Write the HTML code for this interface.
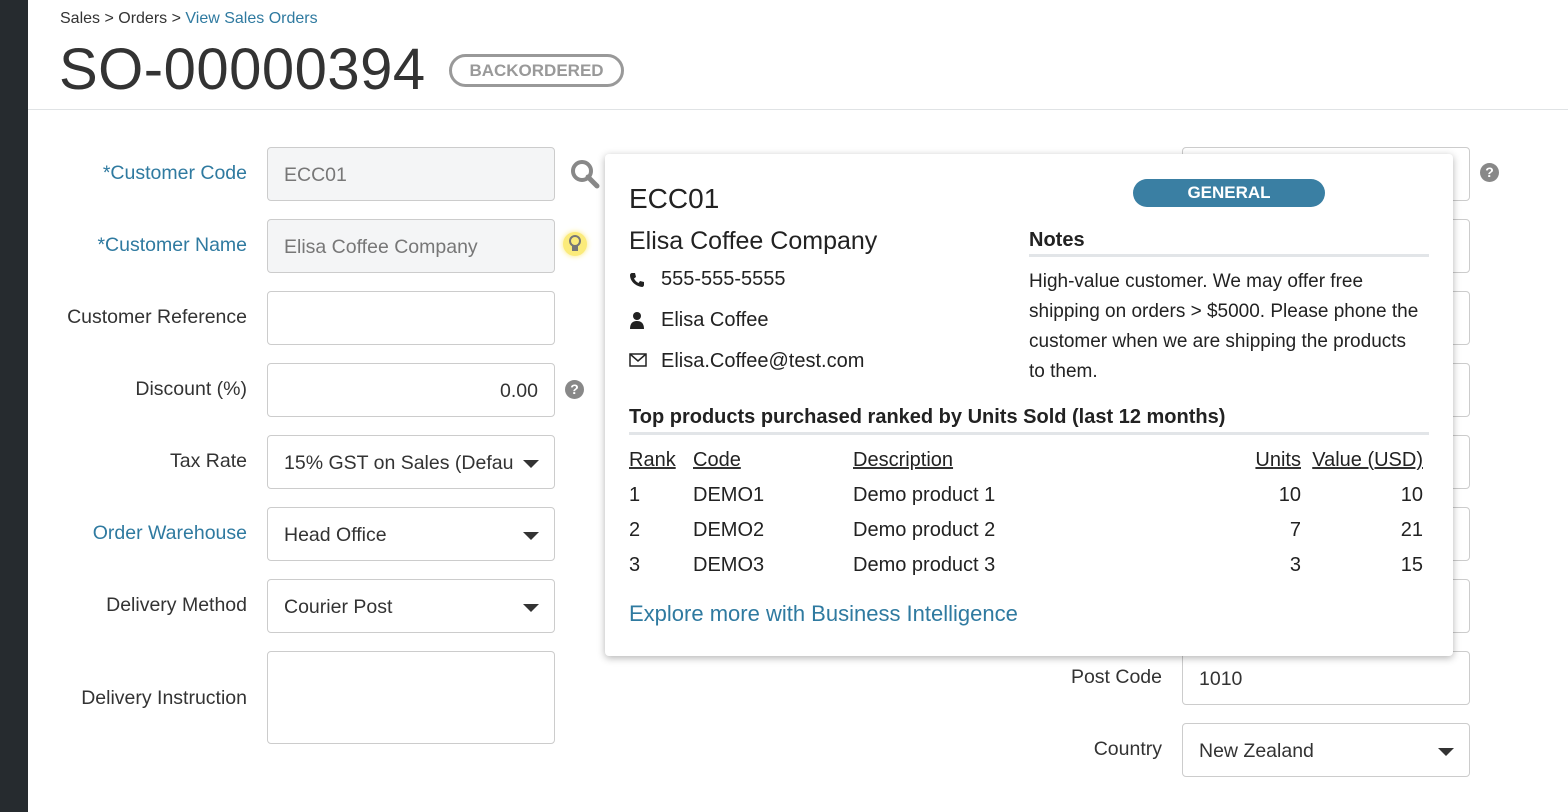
<!DOCTYPE html>
<html><head><style>
*{box-sizing:border-box;margin:0;padding:0}
body{width:1568px;height:812px;overflow:hidden;background:#fff;font-family:"Liberation Sans",sans-serif;color:#333;position:relative}
.side{position:absolute;left:0;top:0;width:28px;height:812px;background:#262b2f}
.a{position:absolute}
.lbl{position:absolute;width:220px;text-align:right;font-size:19.5px;color:#333}
.lbl.b{color:#2f7aa0}
.inp{position:absolute;width:288px;height:54px;border:1px solid #ccc;border-radius:4px;background:#fff;font-size:19.5px;padding:16px 16px;color:#333}
.inp.g{background:#f4f5f6;color:#777}
.dd:after{content:"";position:absolute;right:15px;top:24px;border-left:8px solid transparent;border-right:8px solid transparent;border-top:8px solid #333}
.q{position:absolute;width:19px;height:19px;border-radius:50%;background:#888;color:#fff;font-size:14px;font-weight:bold;text-align:center;line-height:19px}
.pop{position:absolute;left:605px;top:154px;width:848px;height:502px;background:#fff;border-radius:4px;box-shadow:0 2px 8px rgba(0,0,0,.3)}
.pop .t{position:absolute;font-size:20px;color:#222}
td{font-size:20px;color:#222;height:35px}
</style></head><body>
<div class="side"></div>
<div class="a" style="left:60px;top:10px;font-size:16px">Sales &gt; Orders &gt; <span style="color:#2f7aa0">View Sales Orders</span></div>
<div class="a" style="left:59px;top:36px;font-size:58px;color:#333;letter-spacing:0.5px">SO-00000394</div>
<div class="a" style="left:449px;top:54px;width:175px;height:33px;border:3px solid #999;border-radius:17px;color:#999;font-weight:bold;font-size:17px;text-align:center;line-height:27px">BACKORDERED</div>
<div class="a" style="left:28px;top:109px;width:1540px;height:1px;background:#e0e3e5"></div>

<div class="lbl b" style="left:27px;top:162px">*Customer Code</div>
<div class="inp g" style="left:267px;top:147px">ECC01</div>
<div class="lbl b" style="left:27px;top:234px">*Customer Name</div>
<div class="inp g" style="left:267px;top:219px">Elisa Coffee Company</div>
<div class="lbl" style="left:27px;top:306px">Customer Reference</div>
<div class="inp" style="left:267px;top:291px"></div>
<div class="lbl" style="left:27px;top:378px">Discount (%)</div>
<div class="inp" style="left:267px;top:363px;text-align:right">0.00</div>
<div class="q" style="left:565px;top:380px">?</div>
<div class="lbl" style="left:27px;top:450px">Tax Rate</div>
<div class="inp dd" style="left:267px;top:435px">15% GST on Sales (Defau</div>
<div class="lbl b" style="left:27px;top:522px">Order Warehouse</div>
<div class="inp dd" style="left:267px;top:507px">Head Office</div>
<div class="lbl" style="left:27px;top:594px">Delivery Method</div>
<div class="inp dd" style="left:267px;top:579px">Courier Post</div>
<div class="lbl" style="left:27px;top:687px">Delivery Instruction</div>
<div class="inp" style="left:267px;top:651px;height:93px"></div>

<svg class="a" style="left:569px;top:158px" width="32" height="32" viewBox="0 0 32 32"><circle cx="13" cy="13" r="9" fill="none" stroke="#888" stroke-width="4"/><path d="M19 19l9 9" stroke="#888" stroke-width="5" stroke-linecap="round"/></svg>
<div class="a" style="left:563px;top:232px;width:24px;height:24px;border-radius:50%;background:#fbeb7a;box-shadow:0 0 6px #fbe97a"></div>
<svg class="a" style="left:567px;top:234px" width="16" height="20" viewBox="0 0 16 20"><circle cx="8" cy="7" r="5" fill="none" stroke="#777" stroke-width="2"/><rect x="5" y="12" width="6" height="5" fill="#777"/></svg>

<div class="inp" style="left:1182px;top:147px"></div>
<div class="q" style="left:1480px;top:163px">?</div>
<div class="inp" style="left:1182px;top:219px"></div>
<div class="inp" style="left:1182px;top:291px"></div>
<div class="inp" style="left:1182px;top:363px"></div>
<div class="inp" style="left:1182px;top:435px"></div>
<div class="inp" style="left:1182px;top:507px"></div>
<div class="inp" style="left:1182px;top:579px"></div>
<div class="lbl" style="left:942px;top:666px">Post Code</div>
<div class="inp" style="left:1182px;top:651px">1010</div>
<div class="lbl" style="left:942px;top:738px">Country</div>
<div class="inp dd" style="left:1182px;top:723px">New Zealand</div>

<div class="pop">
<div class="t" style="left:24px;top:29px;font-size:28px">ECC01</div>
<div class="t" style="left:24px;top:73px;font-size:25px">Elisa Coffee Company</div>
<svg class="a" style="left:24px;top:118px" width="16" height="16" viewBox="0 0 16 16"><path d="M3 1l3 0 1 4-2 1.5c1 2 2.5 3.5 4.5 4.5L11 9l4 1v3c0 1-1 2-2 2C6 14 1 9 1 3c0-1 1-2 2-2z" fill="#222"/></svg>
<div class="t" style="left:56px;top:114px">555-555-5555</div>
<svg class="a" style="left:24px;top:157px" width="16" height="18" viewBox="0 0 16 18"><circle cx="8" cy="5" r="4" fill="#222"/><path d="M1 18c0-6 3-8 7-8s7 2 7 8z" fill="#222"/></svg>
<div class="t" style="left:56px;top:155px">Elisa Coffee</div>
<svg class="a" style="left:24px;top:199px" width="18" height="14" viewBox="0 0 18 14"><rect x="1" y="1" width="16" height="12" fill="none" stroke="#222" stroke-width="1.5"/><path d="M1 1l8 7 8-7" fill="none" stroke="#222" stroke-width="1.5"/></svg>
<div class="t" style="left:56px;top:196px">Elisa.Coffee@test.com</div>
<div class="a" style="left:528px;top:25px;width:192px;height:28px;border-radius:14px;background:#3a7fa3;color:#fff;font-weight:bold;font-size:17px;text-align:center;line-height:28px">GENERAL</div>
<div class="t" style="left:424px;top:75px;font-weight:bold">Notes</div>
<div class="a" style="left:424px;top:100px;width:400px;height:3px;background:#e2e5e8"></div>
<div class="t" style="left:424px;top:113px;font-size:19px;line-height:30px;width:390px">High-value customer. We may offer free shipping on orders &gt; $5000. Please phone the customer when we are shipping the products to them.</div>
<div class="t" style="left:24px;top:252px;font-weight:bold">Top products purchased ranked by Units Sold (last 12 months)</div>
<div class="a" style="left:24px;top:278px;width:800px;height:3px;background:#e2e5e8"></div>
<table class="a" style="left:24px;top:289px;width:794px;border-collapse:collapse">
<tr style="text-decoration:underline"><td style="width:64px">Rank</td><td style="width:160px">Code</td><td>Description</td><td style="text-align:right">Units</td><td style="text-align:right;width:122px">Value (USD)</td></tr>
<tr><td>1</td><td>DEMO1</td><td>Demo product 1</td><td style="text-align:right">10</td><td style="text-align:right">10</td></tr>
<tr><td>2</td><td>DEMO2</td><td>Demo product 2</td><td style="text-align:right">7</td><td style="text-align:right">21</td></tr>
<tr><td>3</td><td>DEMO3</td><td>Demo product 3</td><td style="text-align:right">3</td><td style="text-align:right">15</td></tr>
</table>
<div class="t" style="left:24px;top:447px;font-size:22px;color:#2f7aa0">Explore more with Business Intelligence</div>
</div>
</body></html>
